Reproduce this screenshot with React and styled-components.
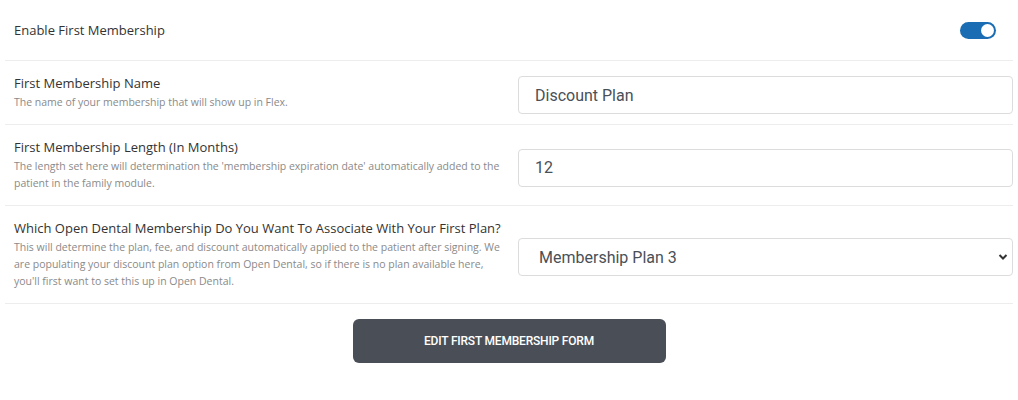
import React from 'react'
import styled, { createGlobalStyle } from 'styled-components'

const GlobalStyle = createGlobalStyle`
    body {
        margin: 0;
        background: #ffffff;
        font-family: "Open Sans", "Liberation Sans", sans-serif;
    }
`

const Page = styled.div`
    padding: 0 5px;
    width: 1008px;
`

const Row = styled.div`
    display: flex;
    align-items: center;
    min-height: ${props => props.$height || 'auto'};
    padding: ${props => props.$flat ? '0' : '12px 0 13px'};
    border-bottom: 1px solid #ededed;
`

const LabelCol = styled.div`
    flex: 0 0 504px;
    box-sizing: border-box;
    padding: 0 4px 0 9px;
`

// field sits a few px below the label's centre line
const FieldCol = styled.div`
    flex: 1;
    padding-left: 9px;
    margin: ${props => props.$end ? '0' : '3px 0 -3px'};
    display: flex;
    justify-content: ${props => props.$end ? 'flex-end' : 'flex-start'};
`

const Title = styled.div`
    font-size: 13px;
    line-height: 21px;
    color: #333333;
`

const Desc = styled.div`
    font-size: 10.5px;
    line-height: 17px;
    color: #8a8a8a;
`

const Input = styled.input`
    box-sizing: border-box;
    width: 100%;
    height: 38px;
    border: 1px solid #dcdcdc;
    border-radius: 4px;
    padding: 0 16px;
    font-family: Roboto, sans-serif;
    font-size: 16px;
    color: #495057;
    outline: none;
`

const SelectWrap = styled.div`
    position: relative;
    width: 100%;
`

const Select = styled.select`
    box-sizing: border-box;
    width: 100%;
    height: 38px;
    border: 1px solid #dcdcdc;
    border-radius: 4px;
    padding: 0 20px;
    font-family: Roboto, sans-serif;
    font-size: 16px;
    color: #495057;
    background: #ffffff;
    appearance: none;
    outline: none;
`

const Chevron = styled.svg`
    position: absolute;
    right: 5px;
    top: 15px;
    pointer-events: none;
`

const Toggle = styled.div`
    width: 36px;
    height: 17px;
    border-radius: 9px;
    background: #1b6db3;
    margin-right: 17px;
    display: flex;
    align-items: center;
    justify-content: flex-end;
    padding: 0 2px;
    box-sizing: border-box;
`

const Knob = styled.div`
    width: 13px;
    height: 13px;
    border-radius: 50%;
    background: #ffffff;
`

const ButtonRow = styled.div`
    display: flex;
    justify-content: center;
    padding-top: 15px;
`

const Button = styled.button`
    width: 313px;
    height: 44px;
    border: none;
    border-radius: 6px;
    background: #4a4f57;
    color: #ffffff;
    font-family: Roboto, sans-serif;
    font-size: 12px;
    font-weight: 500;
    text-transform: uppercase;
    letter-spacing: -0.2px;
`

const App = () => (
    <Page>
        <GlobalStyle/>
        <Row $flat $height="60px">
            <LabelCol>
                <Title>Enable First Membership</Title>
            </LabelCol>
            <FieldCol $end>
                <Toggle><Knob/></Toggle>
            </FieldCol>
        </Row>
        <Row>
            <LabelCol>
                <Title>First Membership Name</Title>
                <Desc>The name of your membership that will show up in Flex.</Desc>
            </LabelCol>
            <FieldCol>
                <Input defaultValue="Discount Plan"/>
            </FieldCol>
        </Row>
        <Row>
            <LabelCol>
                <Title>First Membership Length (In Months)</Title>
                <Desc>The length set here will determination the 'membership expiration date' automatically added to the patient in the family module.</Desc>
            </LabelCol>
            <FieldCol>
                <Input defaultValue="12"/>
            </FieldCol>
        </Row>
        <Row>
            <LabelCol>
                <Title>Which Open Dental Membership Do You Want To Associate With Your First Plan?</Title>
                <Desc>This will determine the plan, fee, and discount automatically applied to the patient after signing. We are populating your discount plan option from Open Dental, so if there is no plan available here, you'll first want to set this up in Open Dental.</Desc>
            </LabelCol>
            <FieldCol>
                <SelectWrap>
                    <Select defaultValue="3">
                        <option value="1">Membership Plan 1</option>
                        <option value="2">Membership Plan 2</option>
                        <option value="3">Membership Plan 3</option>
                    </Select>
                    <Chevron width="10" height="8" viewBox="0 0 10 8">
                        <path d="M1.5 2 L5 5.5 L8.5 2" fill="none" stroke="#333" strokeWidth="2"/>
                    </Chevron>
                </SelectWrap>
            </FieldCol>
        </Row>
        <ButtonRow>
            <Button>Edit First Membership Form</Button>
        </ButtonRow>
    </Page>
)

export default App
